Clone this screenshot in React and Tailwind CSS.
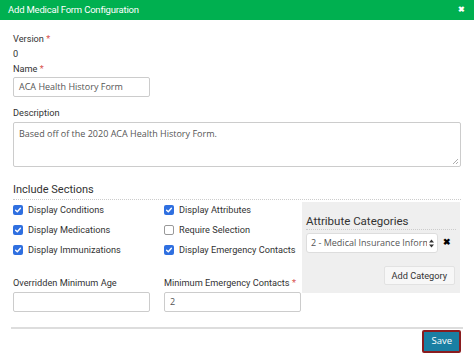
export default function App() {
  return (
    <div className="w-[474px] h-[362px] bg-white overflow-hidden text-[#333] font-['Roboto',sans-serif]">
      <Header />

      <div className="px-[13px]">
        <div className="mt-[11px] text-[9.2px] leading-[15px]">
          Version <span className="text-[#d9534f]">*</span>
        </div>
        <div className="text-[9.2px] leading-[15px]">0</div>
        <div className="text-[9.2px] leading-[15px]">
          Name <span className="text-[#d9534f]">*</span>
        </div>
        <TextBox value="ACA Health History Form" className="mt-px w-[137px]" />

        <div className="mt-2 text-[9.2px] leading-[15px]">Description</div>
        <div className="mt-[2px] relative h-[45px] border border-[#ccc] rounded-[2px] px-[5px] py-[4px] text-[9px] text-[#555] font-['Open_Sans',sans-serif]">
          Based off of the 2020 ACA Health History Form.
          <ResizeGrip />
        </div>

        <div className="mt-[14px] h-[19px] text-[11px] leading-[18px] border-b border-dotted border-[#ccc]">
          Include Sections
        </div>

        <div className="flex">
          <div className="w-[289px]">
            <div className="grid grid-cols-[151px_138px]">
              <Check label="Display Conditions" checked />
              <Check label="Display Attributes" checked />
              <Check label="Display Medications" checked />
              <Check label="Require Selection" />
              <Check label="Display Immunizations" checked />
              <Check label="Display Emergency Contacts" checked />
            </div>

            <div className="mt-[15px] grid grid-cols-[151px_138px]">
              <div>
                <div className="text-[9.2px] leading-[15px]">Overridden Minimum Age</div>
                <TextBox value="" className="mt-[2px] w-[137px]" />
              </div>
              <div>
                <div className="text-[9.2px] leading-[15px] whitespace-nowrap">
                  Minimum Emergency Contacts <span className="text-[#d9534f]">*</span>
                </div>
                <TextBox value="2" className="mt-[2px] w-[137px]" />
              </div>
            </div>
          </div>

          <CategoryPanel />
        </div>

        <div className="mt-[15px] -mx-[2px] h-[2px] bg-[#ddd]" />

        <div className="mt-[1px] flex justify-end">
          <button className="h-[23px] px-[7px] bg-[#1a7fa3] border-2 border-[#8a1c1f] rounded-[2px] text-white text-[9.5px] font-['Open_Sans',sans-serif]">
            Save
          </button>
        </div>
      </div>
    </div>
  )
}

function Header() {
  return (
    <div className="h-5 bg-[#00b050] flex items-center justify-between pl-2 pr-[9px] text-white">
      <div className="text-[9.5px] tracking-[-0.2px]">Add Medical Form Configuration</div>
      <div className="text-[8px] font-bold leading-none">✖</div>
    </div>
  )
}

function TextBox({ value, className }) {
  return (
    <div className={`h-5 border border-[#ccc] rounded-[2px] px-[5px] flex items-center text-[9px] text-[#555] font-['Open_Sans',sans-serif] ${className}`}>
      {value}
    </div>
  )
}

function ResizeGrip() {
  return (
    <svg className="absolute right-[1px] bottom-[1px]" width="7" height="7" viewBox="0 0 7 7">
      <path d="M6 1 L1 6 M6 4 L4 6" stroke="#999" strokeWidth="0.8" />
    </svg>
  )
}

function Check({ label, checked }) {
  return (
    <div className="h-5 flex items-center gap-[5px] text-[9.2px] whitespace-nowrap">
      {checked ? (
        <span className="w-[10px] h-[10px] rounded-[2px] bg-[#2f6fe0] flex items-center justify-center">
          <svg width="8" height="8" viewBox="0 0 8 8">
            <path d="M1.6 4.2 L3.3 5.8 L6.4 2.2" stroke="white" strokeWidth="1.4" fill="none" strokeLinecap="round" strokeLinejoin="round" />
          </svg>
        </span>
      ) : (
        <span className="w-[10px] h-[10px] rounded-[2px] border border-[#999] bg-white" />
      )}
      <span>{label}</span>
    </div>
  )
}

function CategoryPanel() {
  return (
    <div className="mt-[2px] self-start w-[158px] h-[91px] bg-[#efefef] px-1 pt-[10px]">
      <div className="h-[18px] text-[11.5px] leading-[18px] border-b border-dotted border-[#ccc]">
        Attribute Categories
      </div>
      <div className="mt-[3px] flex items-center">
        <div className="w-[132px] h-5 bg-white border border-[#ddd] rounded-[3px] pl-1 pr-[3px] flex items-center gap-[2px] text-[9px] text-[#555] font-['Open_Sans',sans-serif] whitespace-nowrap">
          <span className="flex-1 min-w-0 overflow-hidden">2 - Medical Insurance Inform</span>
          {/* native select up/down arrows */}
          <svg className="shrink-0" width="5" height="9" viewBox="0 0 5 9">
            <path d="M0 3.5 L2.5 0.5 L5 3.5 Z M0 5.5 L2.5 8.5 L5 5.5 Z" fill="#333" />
          </svg>
        </div>
        <span className="ml-[5px] text-[9px] text-black font-bold">✖</span>
      </div>
      <div className="mt-[13px] flex justify-end pr-[1px]">
        <button className="h-[19px] px-[7px] bg-[#f7f7f7] border border-[#e2e2e2] rounded-[2px] text-[9.2px] text-[#333]">
          Add Category
        </button>
      </div>
    </div>
  )
}
